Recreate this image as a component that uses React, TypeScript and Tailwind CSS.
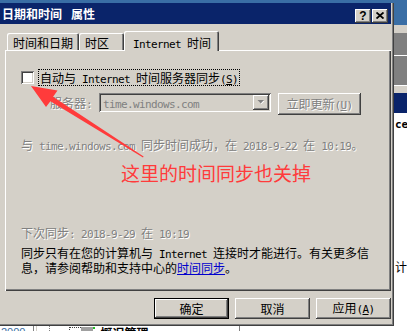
import React from "react";

const raised =
  "shadow-[inset_-1px_-1px_#404040,inset_1px_1px_#ffffff,inset_-2px_-2px_#808080]";
const sunken =
  "shadow-[inset_1px_1px_#808080,inset_-1px_-1px_#ffffff,inset_2px_2px_#404040,inset_-2px_-2px_#d4d0c8]";
const etched = "text-[#808080] [text-shadow:1px_1px_0_#ffffff]";

// half-width latin text, like SimSun's western glyphs
function M({ children }: { children: React.ReactNode }) {
  return (
    <span className="whitespace-pre font-['DejaVu_Sans_Mono',monospace] text-[11px] tracking-[-0.62px]">
      {children}
    </span>
  );
}

function Tab({
  label,
  width,
  selected,
  pl,
}: {
  label: React.ReactNode;
  width: string;
  selected?: boolean;
  pl: string;
}) {
  return (
    <div
      className={`${width} ${pl} ${
        selected ? "relative z-10 h-[20px] -mb-px pt-[5px]" : "h-[17px] pt-[3px]"
      } whitespace-nowrap rounded-t-[2px] bg-[#d4d0c8] leading-[13px] text-black shadow-[inset_1px_1px_#ffffff,inset_-1px_0_#404040,inset_-2px_0_#808080]`}
    >
      {label}
    </div>
  );
}

function DialogButton({
  children,
  isDefault,
}: {
  children: React.ReactNode;
  isDefault?: boolean;
}) {
  return (
    <div
      className={`flex h-[21px] w-[75px] items-center justify-center bg-[#d4d0c8] leading-[13px] text-black ${
        isDefault ? "border border-black" : ""
      } ${raised}`}
    >
      <span className="whitespace-nowrap">{children}</span>
    </div>
  );
}

export default function App() {
  return (
    <div className="relative h-[331px] w-[407px] overflow-hidden bg-white font-['Noto_Sans_CJK_SC',sans-serif] text-[12px]">
      {/* window behind, top edge */}
      <div className="h-[3px] bg-[#3a6ea5]" />

      <div className="flex h-[323px]">
        {/* dialog */}
        <div className="flex w-[399px] flex-col bg-[#d4d0c8] pr-[3px] shadow-[inset_-1px_-1px_#404040,inset_-2px_-2px_#808080]">
          {/* title bar */}
          <div className="flex h-[21px] items-center bg-[#0a246a] pl-[2px] pr-[3px]">
            <span className="font-bold leading-[13px] text-white">日期和时间</span>
            <span className="ml-[9px] font-bold leading-[13px] text-white">属性</span>
            <div className="ml-auto mt-[4px] flex gap-[1px]">
              <div className={`flex h-[14px] w-[16px] items-center justify-center bg-[#d4d0c8] ${raised}`}>
                <span className="font-['Liberation_Sans',sans-serif] text-[12px] font-bold leading-[12px] text-black">
                  ?
                </span>
              </div>
              <div className={`flex h-[14px] w-[16px] items-center justify-center bg-[#d4d0c8] ${raised}`}>
                <svg width="8" height="7" viewBox="0 0 8 7">
                  <path d="M0.5 0.5 L7.5 6.5 M7.5 0.5 L0.5 6.5" stroke="#000" strokeWidth="1.8" />
                </svg>
              </div>
            </div>
          </div>

          {/* tabs */}
          <div className="mt-[7px] flex h-[19px] items-end pl-[7px]">
            <Tab label="时间和日期" width="w-[72px]" pl="pl-[6px]" />
            <Tab label="时区" width="w-[45px]" pl="pl-[6px]" />
            <Tab
              selected
              width="w-[95px]"
              pl="pl-[9px]"
              label={
                <>
                  <M>{"Internet "}</M>时间
                </>
              }
            />
          </div>

          {/* tab panel */}
          <div className="ml-[5px] flex h-[241px] w-[386px] flex-col whitespace-nowrap pl-[16px] pt-[19px] shadow-[inset_1px_1px_#ffffff,inset_-1px_-1px_#404040,inset_-2px_-2px_#808080]">
            <div className="flex h-[17px] items-center">
              <div className={`h-[13px] w-[13px] bg-white ${sunken}`} />
              <div className="ml-[4px] h-[17px] w-[202px] border border-dotted border-black pl-[1px] pt-px leading-[13px] text-black">
                <span>
                  自动与<M>{" Internet "}</M>时间服务器同步
                  <M>
                    (<u>S</u>)
                  </M>
                </span>
              </div>
            </div>

            <div className="mt-[7px] flex items-start">
              <span className={`ml-[29px] mt-[3px] leading-[13px] ${etched}`}>
                服务器<M>:</M>
              </span>
              <div className={`relative ml-[7px] h-[19px] w-[172px] bg-[#d4d0c8] pl-[4px] pt-[3px] leading-[13px] ${sunken}`}>
                <span className="text-[#808080]">
                  <M>time.windows.com</M>
                </span>
                <div className={`absolute right-[2px] top-[2px] flex h-[15px] w-[16px] items-center justify-center bg-[#d4d0c8] ${raised}`}>
                  <svg width="8" height="5" viewBox="0 0 8 5">
                    <path d="M1.5 1 H7.5 L4.5 4 Z" fill="#ffffff" />
                    <path d="M0.5 0 H7 L3.75 3.5 Z" fill="#808080" />
                  </svg>
                </div>
              </div>
              <div className={`ml-[7px] flex h-[22px] w-[83px] items-center justify-center bg-[#d4d0c8] leading-[13px] ${raised}`}>
                <span className={etched}>
                  立即更新
                  <M>
                    (<u>U</u>)
                  </M>
                </span>
              </div>
            </div>

            <div className={`mt-[23px] leading-[13px] ${etched}`}>
              与<M>{" time.windows.com "}</M>同步时间成功，在<M>{" 2018-9-22 "}</M>在<M>{" 10:19"}</M>。
            </div>

            <div className="ml-[100px] mt-[10px] text-[19px] leading-[20px] text-[#ff3b3b]">
              这里的时间同步也关掉
            </div>

            <div className={`mt-[43px] leading-[13px] ${etched}`}>
              下次同步<M>{": 2018-9-29 "}</M>在<M>{" 10:19"}</M>
            </div>

            <div className="mt-[5px] leading-[13px] text-black">
              同步只有在您的计算机与<M>{" Internet "}</M>连接时才能进行。有关更多信
              <br />
              息，请参阅帮助和支持中心的
              <span className="text-[#0000cc] underline">时间同步</span>。
            </div>
          </div>

          {/* buttons */}
          <div className="ml-[5px] mt-[7px] flex w-[386px] justify-end gap-[6px]">
            <DialogButton isDefault>确定</DialogButton>
            <DialogButton>取消</DialogButton>
            <DialogButton>
              应用
              <M>
                (<u>A</u>)
              </M>
            </DialogButton>
          </div>
        </div>

        {/* desktop to the right */}
        <div className="flex flex-1 flex-col">
          <div className="h-[22px] bg-[#3a6ea5]" />
          <div className="h-[8px] bg-[#d4d0c8]" />
          <div className="h-[22px] bg-[#808080]" />
          <div className="h-px bg-white" />
          <div className="h-[29px] bg-[#808080]" />
          <div className="h-px bg-white" />
          <div className="h-[7px] bg-[#d4d0c8]" />
          <div className="h-[20px] bg-[#0a246a]" />
          <div className="flex-1 bg-white pl-[1px] pt-[6px] font-['DejaVu_Sans_Mono',monospace] text-[11px] font-bold leading-[11px] text-black">
            <div>ce</div>
            <div className="mt-[131px] font-['Noto_Sans_CJK_SC',sans-serif] text-[12px] font-normal">计</div>
          </div>
        </div>
      </div>

      {/* desktop below */}
      <div className="flex h-[5px] items-start overflow-hidden bg-white">
        <span className="mt-[1px] pl-[1px] font-['Liberation_Sans',sans-serif] text-[11px] leading-[11px] text-[#3a6ea5]">
          2000
        </span>
        <div className="ml-[8px] h-[5px] w-px bg-[#808080]" />
        <div className="ml-[2px] h-[5px] w-px bg-[#d4d0c8]" />
        <div className="ml-[12px] h-[5px] w-px border-l border-dotted border-[#808080]" />
        <div className="ml-[19px] mt-[1px] h-[5px] w-[12px] border-l border-t border-dotted border-[#404040]" />
        <div className="mt-[1px] h-[5px] w-[12px] bg-[#a0a0a0]" />
        <div className="mt-[1px] h-[2px] w-[2px] bg-[#22c022]" />
        <span className="ml-[5px] mt-[1px] text-[12px] font-bold leading-[12px] text-black">概况管理</span>
        <div className="ml-[90px] h-[5px] w-px bg-[#808080]" />
      </div>

      {/* red annotation arrow */}
      <svg
        className="pointer-events-none absolute left-0 top-0"
        width="407"
        height="331"
        viewBox="0 0 407 331"
      >
        <polygon
          points="31,86 46,107 50.4,101.2 143,157.6 143.6,156.4 53.1,96.8 57.5,90.5"
          fill="#ff3b3b"
        />
      </svg>
    </div>
  );
}
